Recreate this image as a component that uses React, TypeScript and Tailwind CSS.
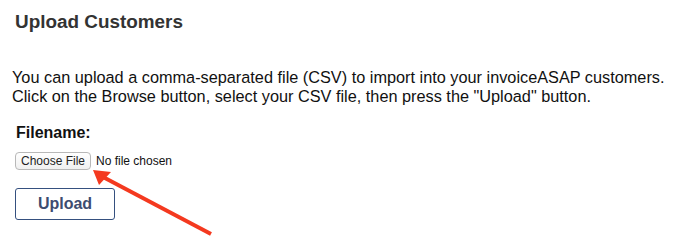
export default function App() {
  return (
    <div className="relative w-[682px] h-[252px] bg-white overflow-hidden" style={{ fontFamily: '"Liberation Sans", Arial, sans-serif' }}>
      <div className="pl-4 pr-4">
        <h3 className="pt-[11px] ml-[-1px] text-[18.9px] leading-[22px] font-bold text-[#333]">Upload Customers</h3>
        <p className="mt-[35px] ml-[-4px] text-[16.3px] leading-[19px] text-[#111] whitespace-nowrap">
          You can upload a comma-separated file (CSV) to import into your invoiceASAP customers.
          <br />
          Click on the Browse button, select your CSV file, then press the "Upload" button.
        </p>
        <div className="mt-[17px] text-[16px] leading-[19px] font-bold text-[#111]">Filename:</div>
        <div className="mt-[10px] flex items-center gap-[5px]">
          <button className="h-[18px] w-[76px] rounded-[4px] border border-[#b8b8b8] bg-gradient-to-b from-white to-[#f0f0f0] text-[12px] leading-[16px] text-[#222] ml-[-1px]">
            Choose File
          </button>
          <span className="text-[12px] leading-[16px] text-[#111]">No file chosen</span>
        </div>
        <button className="mt-[18px] ml-[-1px] h-[32px] w-[100px] rounded-[3px] border border-[#35507f] bg-white text-[16px] font-bold text-[#3d4c70]">
          Upload
        </button>
      </div>
      <svg className="absolute left-0 top-0" width="682" height="252" viewBox="0 0 682 252">
        <line x1="211" y1="234" x2="103" y2="177" stroke="#f4391f" strokeWidth="4" strokeLinecap="butt" />
        <polygon points="93,170 111,172 99,185" fill="#f4391f" />
      </svg>
    </div>
  );
}
